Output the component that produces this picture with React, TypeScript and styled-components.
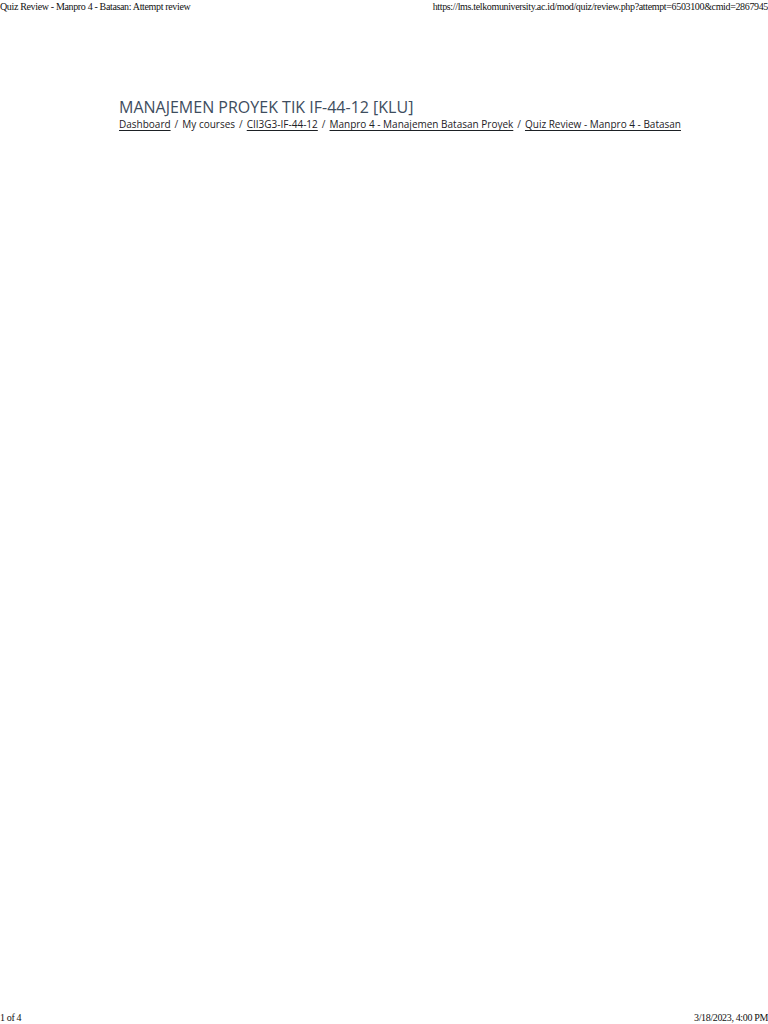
import React from "react";
import styled, { createGlobalStyle } from "styled-components";

const Global = createGlobalStyle`
  html, body { margin: 0; padding: 0; background: #fff; }
  * { box-sizing: border-box; }
`;

const Page = styled.div`
  width: 768px;
  height: 1024px;
  display: flex;
  flex-direction: column;
  justify-content: space-between;
  background: #fff;
  overflow: hidden;
`;

const PrintBar = styled.div`
  display: flex;
  justify-content: space-between;
  align-items: center;
  font-family: "Liberation Serif", serif;
  font-size: 10px;
  color: #111;
  white-space: nowrap;
  height: 12px;
  letter-spacing: -0.35px;
`;

const TopBar = styled(PrintBar)``;

const BottomBar = styled(PrintBar)`
  height: 14px;
`;

const Main = styled.div`
  flex: 1;
  padding: 84px 0 0 119px;
`;

const Title = styled.h1`
  margin: 0;
  font-family: "Open Sans", sans-serif;
  font-weight: 400;
  font-size: 16px;
  color: #3e4d5e;
  line-height: 22px;
`;

const Crumbs = styled.nav`
  display: flex;
  align-items: center;
  gap: 4px;
  font-family: "Open Sans", sans-serif;
  font-size: 10px;
  line-height: 13px;
  color: #1d2125;
  white-space: nowrap;
`;

const Crumb = styled.span<{ $link?: boolean }>`
  text-decoration: ${(p) => (p.$link ? "underline" : "none")};
  text-underline-offset: 2px;
`;

const Sep = styled.span`
  color: #333;
`;

export default function App() {
  const crumbs: [string, boolean][] = [
    ["Dashboard", true],
    ["My courses", false],
    ["CII3G3-IF-44-12", true],
    ["Manpro 4 - Manajemen Batasan Proyek", true],
    ["Quiz Review - Manpro 4 - Batasan", true],
  ];
  return (
    <>
      <Global />
      <Page>
        <TopBar>
          <span>Quiz Review - Manpro 4 - Batasan: Attempt review</span>
          <span>https://lms.telkomuniversity.ac.id/mod/quiz/review.php?attempt=6503100&amp;cmid=2867945</span>
        </TopBar>
        <Main>
          <Title>MANAJEMEN PROYEK TIK IF-44-12 [KLU]</Title>
          <Crumbs>
            {crumbs.map(([t, l], i) => (
              <React.Fragment key={t}>
                {i > 0 && <Sep>/</Sep>}
                <Crumb $link={l}>{t}</Crumb>
              </React.Fragment>
            ))}
          </Crumbs>
        </Main>
        <BottomBar>
          <span>1 of 4</span>
          <span>3/18/2023, 4:00 PM</span>
        </BottomBar>
      </Page>
    </>
  );
}
